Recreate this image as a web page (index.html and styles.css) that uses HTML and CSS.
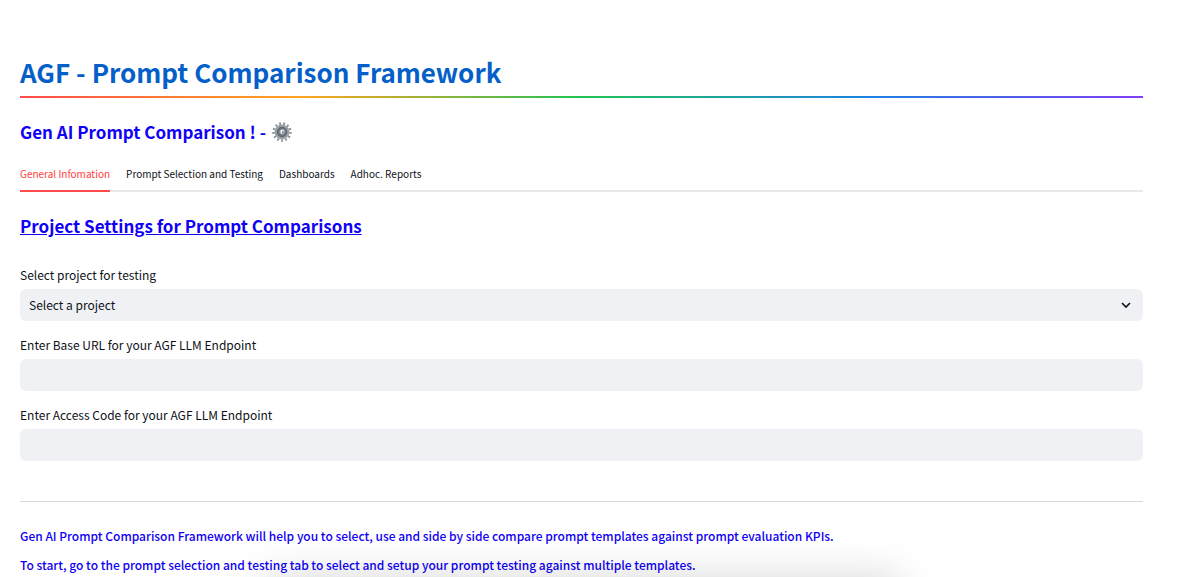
FILE: index.html
```html
<!DOCTYPE html>
<html lang="en">
<head>
    <meta charset="UTF-8">
    <meta name="viewport" content="width=device-width, initial-scale=1.0">
    <title>AGF - Prompt Comparison Framework</title>
    <link rel="stylesheet" href="styles.css">
</head>
<body>

<main class="container">
    <h1 class="title">AGF - Prompt Comparison Framework</h1>
    <div class="rainbow"></div>

    <h2 class="subtitle">
        Gen AI Prompt Comparison ! -
        <svg class="gear" viewBox="0 0 40 40" aria-hidden="true">
            <circle cx="20" cy="20" r="17" fill="none" stroke="#8b9196" stroke-width="5" stroke-dasharray="3.6 4.61"/>
            <circle cx="20" cy="20" r="12.5" fill="#8b949b" stroke="#9aa2a8" stroke-width="5"/>
            <circle cx="20" cy="20" r="9.5" fill="#68727a" stroke="#5b646b" stroke-width="2"/>
            <circle cx="20" cy="20" r="6" fill="#a7afb5" stroke="#788087" stroke-width="2"/>
            <circle cx="21" cy="19" r="4" fill="#f4f4f4"/>
            <path d="M21 17l3 3-3 3z" fill="#30363b"/>
        </svg>
    </h2>

    <nav class="tabs">
        <button class="tab active">General Infomation</button>
        <button class="tab">Prompt Selection and Testing</button>
        <button class="tab">Dashboards</button>
        <button class="tab">Adhoc. Reports</button>
    </nav>

    <h2 class="section-title">Project Settings for Prompt Comparisons</h2>

    <form class="settings">
        <div class="field">
            <label for="project">Select project for testing</label>
            <div class="select-box">
                <select id="project">
                    <option>Select a project</option>
                </select>
                <svg class="chevron" viewBox="0 0 10 8" aria-hidden="true">
                    <path d="M1 2l4 4 4-4" fill="none" stroke="#0e1117" stroke-width="1.6"/>
                </svg>
            </div>
        </div>
        <div class="field">
            <label for="base-url">Enter Base URL for your AGF LLM Endpoint</label>
            <input type="text" id="base-url">
        </div>
        <div class="field">
            <label for="access-code">Enter Access Code for your AGF LLM Endpoint</label>
            <input type="text" id="access-code">
        </div>
    </form>

    <hr class="divider">

    <div class="notes">
        <p>Gen AI Prompt Comparison Framework will help you to select, use and side by side compare prompt templates against prompt evaluation KPIs.</p>
        <p>To start, go to the prompt selection and testing tab to select and setup your prompt testing against multiple templates.</p>
    </div>
</main>

<div class="bottom-shadow"></div>

</body>
</html>
```
FILE: styles.css
```css
* {
    box-sizing: border-box;
}
body {
    margin: 0;
    font-family: "Noto Sans CJK SC", "Noto Sans", sans-serif;
    font-size: 12px;
    color: #0e1117;
    background-color: #fff;
    overflow: hidden;
}
.container {
    padding: 52px 57px 0 20px;
}
.title {
    margin: 0;
    font-size: 26px;
    line-height: 40px;
    color: #0460c8;
}
.rainbow {
    height: 2px;
    margin-top: 4px;
    background: linear-gradient(to right, #ff4b4b, #ffa421 25%, #21c354 50%, #1c83e1 75%, #803df5);
}
.subtitle, .section-title {
    margin: 0;
    font-size: 17px;
    line-height: 28px;
    color: #1000f5;
}
.subtitle {
    display: flex;
    align-items: center;
    gap: 6px;
    margin-top: 20px;
}
.gear {
    width: 20px;
    height: 20px;
}
.tabs {
    display: flex;
    gap: 16px;
    margin-top: 12px;
    border-bottom: 2px solid #e9e9eb;
}
.tab {
    height: 34px;
    margin-bottom: -2px;
    padding: 0 0 2px;
    border: none;
    border-bottom: 2px solid transparent;
    background: none;
    font-family: inherit;
    font-size: 10px;
    color: inherit;
    cursor: pointer;
}
.tab.active {
    color: #ff3b3b;
    border-bottom-color: #ff4b4b;
}
.section-title {
    margin-top: 20px;
    text-decoration: underline;
}
.settings {
    display: flex;
    flex-direction: column;
    gap: 14px;
    margin-top: 25px;
}
.field label {
    display: block;
    height: 24px;
    line-height: 20px;
}
.field input, .field select {
    display: block;
    width: 100%;
    height: 32px;
    padding: 0 9px 2px;
    border: none;
    border-radius: 6px;
    background-color: #f0f1f5;
    font-family: inherit;
    font-size: 12px;
    color: inherit;
    appearance: none;
}
.select-box {
    position: relative;
}
.chevron {
    position: absolute;
    top: 12px;
    right: 12px;
    width: 10px;
    height: 8px;
    pointer-events: none;
}
.divider {
    margin: 40px 0 0;
    border: none;
    border-top: 1px solid #d8d8da;
}
.notes {
    margin-top: 24px;
    font-weight: 500;
    color: #1000f5;
}
.notes p {
    margin: 0 0 9px;
    line-height: 20px;
}
/* shadow of the bar docked under the page */
.bottom-shadow {
    position: fixed;
    top: 100%;
    left: 22%;
    right: 25%;
    height: 40px;
    box-shadow: 0 0 40px rgba(0, 0, 0, 0.16);
    pointer-events: none;
}
```
